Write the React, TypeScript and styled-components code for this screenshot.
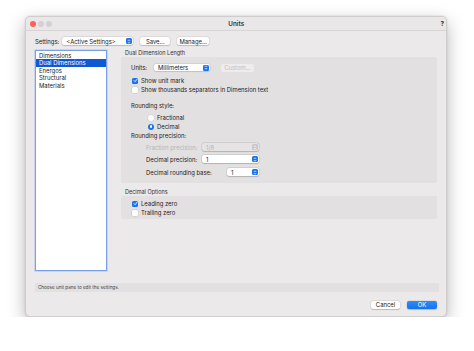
import { FC, ReactNode } from 'react';
import styled, { createGlobalStyle } from 'styled-components';

const GlobalStyle = createGlobalStyle`
  html, body {
    margin: 0;
    padding: 0;
    background: #ffffff;
  }
  body {
    font-family: Inter, "Noto Sans", "Liberation Sans", sans-serif;
    font-size: 5.9px;
    color: #222;
  }
`;

const panes = ['Dimensions', 'Dual Dimensions', 'Energos', 'Structural', 'Materials'];

const Stepper: FC<{ disabled?: boolean }> = ({ disabled }) => (
  <StepBox $disabled={disabled}>
    <svg width="4" height="5" viewBox="0 0 8 10">
      <path d="M1.5 4 L4 1.5 L6.5 4 M1.5 6 L4 8.5 L6.5 6" fill="none" stroke="#fff" strokeWidth="1.4" />
    </svg>
  </StepBox>
);

const Select: FC<{ value: string; width: number; disabled?: boolean }> = ({ value, width, disabled }) => (
  <SelectBox $width={width} $disabled={disabled}>
    <span>{value}</span>
    <Stepper disabled={disabled} />
  </SelectBox>
);

const Check: FC<{ checked?: boolean; children: ReactNode }> = ({ checked, children }) => (
  <Row>
    <CheckBox $checked={checked}>
      {checked && (
        <svg width="5" height="5" viewBox="0 0 10 10">
          <path d="M2 5.2 L4.2 7.4 L8 2.6" fill="none" stroke="#fff" strokeWidth="1.8" strokeLinecap="round" />
        </svg>
      )}
    </CheckBox>
    <span>{children}</span>
  </Row>
);

const Radio: FC<{ checked?: boolean; children: ReactNode }> = ({ checked, children }) => (
  <Row $indent={17}>
    <RadioDot $checked={checked} />
    <span>{children}</span>
  </Row>
);

const App: FC = () => {
  return (
    <>
      <GlobalStyle />
      <Window>
        <TitleBar>
          <Lights>
            <Light $color="#fe5f57" />
            <Light $color="#d3d1d2" />
            <Light $color="#d3d1d2" />
          </Lights>
          <Title>Units</Title>
          <Help>?</Help>
        </TitleBar>
        <Body>
          <SettingsRow>
            <Label>Settings:</Label>
            <Select value="<Active Settings>" width={71} />
            <Button $width={30} $left={7}>Save...</Button>
            <Button $width={32} $left={7}>Manage...</Button>
          </SettingsRow>
          <Main>
            <PaneList>
              {panes.map((p) => (
                <PaneItem key={p} $selected={p === 'Dual Dimensions'}>
                  {p}
                </PaneItem>
              ))}
            </PaneList>
            <Content>
              <GroupLabel>Dual Dimension Length</GroupLabel>
              <Group $padTop={6} $padBottom={6}>
                <Row $height={9}>
                  <Label>Units:</Label>
                  <Gap $w={4} />
                  <Select value="Millimeters" width={56} />
                  <Gap $w={11} />
                  <Button $width={33} $disabled>Custom...</Button>
                </Row>
                <Spacer $h={4} />
                <Check checked>Show unit mark</Check>
                <Check>Show thousands separators in Dimension text</Check>
                <Spacer $h={7} />
                <Row>
                  <Label>Rounding style:</Label>
                </Row>
                <Spacer $h={3} />
                <Radio>Fractional</Radio>
                <Radio checked>Decimal</Radio>
                <Row>
                  <Label>Rounding precision:</Label>
                </Row>
                <Spacer $h={2} />
                <Row $height={10} $indent={15}>
                  <FieldLabel $width={56} $disabled>Fraction precision:</FieldLabel>
                  <Select value="1/8" width={57} disabled />
                </Row>
                <Spacer $h={2} />
                <Row $height={10} $indent={15}>
                  <FieldLabel $width={56}>Decimal precision:</FieldLabel>
                  <Select value="1" width={57} />
                </Row>
                <Spacer $h={3} />
                <Row $height={10} $indent={15}>
                  <FieldLabel $width={81}>Decimal rounding base:</FieldLabel>
                  <Select value="1" width={32} />
                </Row>
              </Group>
              <Spacer $h={6} />
              <GroupLabel>Decimal Options</GroupLabel>
              <Group $padTop={3} $padBottom={2}>
                <Check checked>Leading zero</Check>
                <Check>Trailing zero</Check>
              </Group>
            </Content>
          </Main>
          <StatusBar>Choose unit pane to edit the settings.</StatusBar>
          <Footer>
            <Button $width={29}>Cancel</Button>
            <Button $width={30} $left={7} $primary>
              OK
            </Button>
          </Footer>
        </Body>
      </Window>
    </>
  );
};

const Window = styled.div`
  margin: 16px 0 0 25px;
  width: 422px;
  height: 301px;
  background: #ebe9ea;
  border-radius: 5px;
  border: 0.5px solid #cfcdce;
  box-sizing: border-box;
  box-shadow: 0 6px 18px rgba(0, 0, 0, 0.28), 0 0 2px rgba(0, 0, 0, 0.15);
  overflow: hidden;
  display: flex;
  flex-direction: column;
`;

const TitleBar = styled.div`
  height: 14px;
  flex: none;
  display: flex;
  align-items: center;
  background: #e9e7e8;
  border-bottom: 1px solid #d6d4d5;
  box-sizing: border-box;
`;

const Lights = styled.div`
  display: flex;
  gap: 2px;
  padding-left: 4px;
`;

const Light = styled.div<{ $color: string }>`
  width: 6px;
  height: 6px;
  border-radius: 50%;
  background: ${(p) => p.$color};
`;

const Title = styled.div`
  flex: 1;
  text-align: center;
  font-weight: 600;
  font-size: 6.3px;
  color: #333;
  margin-right: 20px;
`;

const Help = styled.div`
  font-weight: 700;
  font-size: 6.3px;
  padding-right: 2px;
  color: #333;
`;

const Body = styled.div`
  flex: 1;
  display: flex;
  flex-direction: column;
  padding: 5px 9px 9px 9px;
`;

const SettingsRow = styled.div`
  height: 10px;
  display: flex;
  align-items: center;
`;

const Label = styled.span`
  margin-right: 3px;
  white-space: nowrap;
`;

const FieldLabel = styled.span<{ $width: number; $disabled?: boolean }>`
  width: ${(p) => p.$width}px;
  flex: none;
  white-space: nowrap;
  color: ${(p) => (p.$disabled ? '#b7b5b6' : '#222')};
`;

const SelectBox = styled.div<{ $width: number; $disabled?: boolean }>`
  width: ${(p) => p.$width}px;
  height: 7.5px;
  flex: none;
  box-sizing: border-box;
  display: flex;
  align-items: center;
  justify-content: space-between;
  padding: 0 1px 0 4px;
  background: ${(p) => (p.$disabled ? '#e5e3e4' : '#ffffff')};
  color: ${(p) => (p.$disabled ? '#b7b5b6' : '#222')};
  border-radius: 2px;
  box-shadow: 0 0 0 0.5px rgba(0, 0, 0, 0.12), 0 0.5px 1px rgba(0, 0, 0, 0.15);
`;

const StepBox = styled.div<{ $disabled?: boolean }>`
  width: 6px;
  height: 6px;
  border-radius: 1.5px;
  background: ${(p) => (p.$disabled ? '#c9c7c8' : '#1a73ef')};
  display: flex;
  align-items: center;
  justify-content: center;
`;

const Button = styled.div<{ $width: number; $left?: number; $primary?: boolean; $disabled?: boolean }>`
  width: ${(p) => p.$width}px;
  height: 8px;
  margin-left: ${(p) => p.$left ?? 0}px;
  flex: none;
  display: flex;
  align-items: center;
  justify-content: center;
  border-radius: 2px;
  background: ${(p) => (p.$primary ? 'linear-gradient(#2f8cf8, #1672ee)' : p.$disabled ? '#eeeced' : '#ffffff')};
  color: ${(p) => (p.$primary ? '#fff' : p.$disabled ? '#c3c1c2' : '#222')};
  box-shadow: ${(p) => (p.$disabled ? 'none' : '0 0 0 0.5px rgba(0,0,0,0.1), 0 0.5px 1px rgba(0,0,0,0.15)')};
`;

const Main = styled.div`
  height: 221px;
  margin-top: 4px;
  display: flex;
  gap: 14px;
`;

const PaneList = styled.div`
  width: 72px;
  flex: none;
  box-sizing: border-box;
  background: #fff;
  border: 1px solid #7aa0e6;
  box-shadow: 0 0 0 0.5px #a9c2f0;
  padding-top: 0.5px;
`;

const PaneItem = styled.div<{ $selected?: boolean }>`
  height: 7.6px;
  line-height: 7.6px;
  padding-left: 3px;
  background: ${(p) => (p.$selected ? '#0d5ad4' : 'transparent')};
  color: ${(p) => (p.$selected ? '#fff' : '#222')};
`;

const Content = styled.div`
  flex: 1;
  display: flex;
  flex-direction: column;
`;

const GroupLabel = styled.div`
  height: 7px;
  line-height: 7px;
  padding-left: 4px;
  font-size: 5.5px;
  color: #333;
`;

const Group = styled.div<{ $padTop: number; $padBottom: number }>`
  background: #e2e0e1;
  border-radius: 2px;
  padding: ${(p) => p.$padTop}px 10px ${(p) => p.$padBottom}px 10px;
  display: flex;
  flex-direction: column;
`;

const Row = styled.div<{ $height?: number; $indent?: number }>`
  height: ${(p) => p.$height ?? 9}px;
  padding-left: ${(p) => p.$indent ?? 0}px;
  display: flex;
  align-items: center;
  white-space: nowrap;
`;

const Gap = styled.span<{ $w: number }>`
  width: ${(p) => p.$w}px;
  flex: none;
`;

const Spacer = styled.div<{ $h: number }>`
  height: ${(p) => p.$h}px;
  flex: none;
`;

const CheckBox = styled.div<{ $checked?: boolean }>`
  width: 6px;
  height: 6px;
  margin: 0 3px 0 1px;
  border-radius: 1.5px;
  box-sizing: border-box;
  display: flex;
  align-items: center;
  justify-content: center;
  background: ${(p) => (p.$checked ? '#1a73ef' : '#ffffff')};
  box-shadow: ${(p) => (p.$checked ? 'none' : '0 0 0 0.5px rgba(0,0,0,0.12)')};
`;

const RadioDot = styled.div<{ $checked?: boolean }>`
  width: 6px;
  height: 6px;
  margin-right: 3px;
  border-radius: 50%;
  display: flex;
  align-items: center;
  justify-content: center;
  background: ${(p) => (p.$checked ? '#1a73ef' : '#ffffff')};
  box-shadow: ${(p) => (p.$checked ? 'none' : '0 0 0 0.5px rgba(0,0,0,0.1)')};
  &::after {
    content: '';
    display: ${(p) => (p.$checked ? 'block' : 'none')};
    width: 2.2px;
    height: 2.2px;
    border-radius: 50%;
    background: #fff;
  }
`;

const StatusBar = styled.div`
  height: 9px;
  margin: 12px -2px 0 0;
  padding-left: 3px;
  display: flex;
  align-items: center;
  background: #e2e0e1;
  font-size: 4.6px;
  color: #444;
`;

const Footer = styled.div`
  margin-top: 8px;
  height: 9px;
  display: flex;
  justify-content: flex-end;
  align-items: center;
`;

export default App;
